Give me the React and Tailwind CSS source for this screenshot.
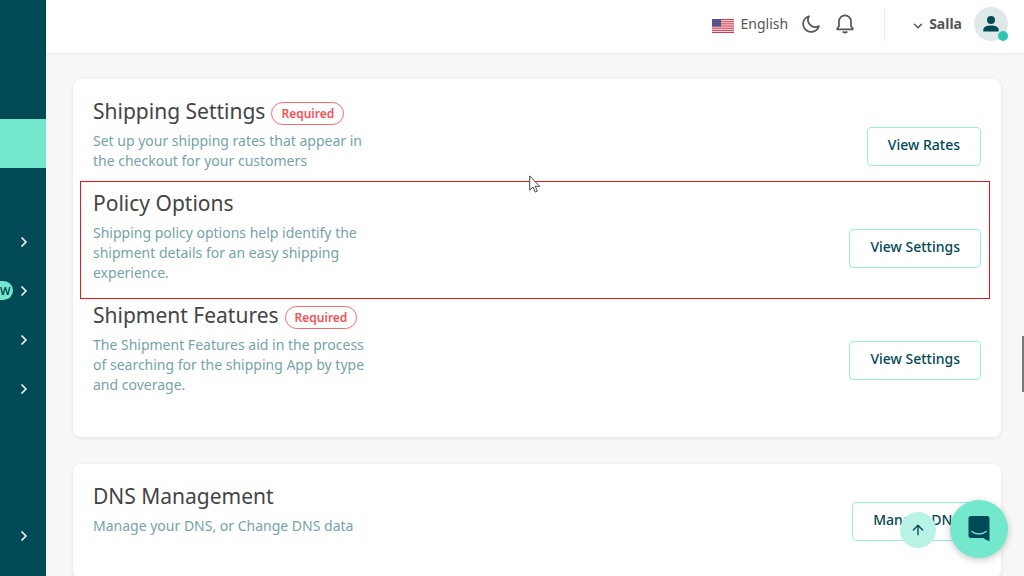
import { ArrowUp, ChevronDown, ChevronRight } from "lucide-react";

const menuItems = [
  { id: "home", label: "Home" },
  { id: "settings", label: "Settings", active: true },
  { id: "account", label: "Account" },
  { id: "orders", label: "Orders", hasChildren: true },
  { id: "marketing", label: "Marketing", badge: "W", hasChildren: true },
  { id: "products", label: "Products", hasChildren: true },
  { id: "reports", label: "Reports", hasChildren: true },
  { id: "apps", label: "Apps" },
  { id: "services", label: "Services" },
  { id: "more", label: "More", hasChildren: true },
];

const shippingRows = [
  {
    title: "Shipping Settings",
    required: true,
    description: "Set up your shipping rates that appear in the checkout for your customers",
    action: "View Rates",
  },
  {
    title: "Policy Options",
    highlighted: true,
    description:
      "Shipping policy options help identify the shipment details for an easy shipping experience.",
    action: "View Settings",
  },
  {
    title: "Shipment Features",
    required: true,
    description:
      "The Shipment Features aid in the process of searching for the shipping App by type and coverage.",
    action: "View Settings",
  },
];

const dnsRow = {
  title: "DNS Management",
  description: "Manage your DNS, or Change DNS data",
  action: "Manage DNS",
};

function Flag() {
  return (
    <svg viewBox="0 0 22 14" className="h-[14px] w-[22px]" aria-hidden="true">
      <rect width="22" height="14" fill="#f6e9ec" />
      {[0, 1, 2, 3, 4, 5, 6].map((i) => (
        <rect key={i} y={i * 2.15} width="22" height="1.1" fill="#d3394f" />
      ))}
      <rect width="9" height="7.5" fill="#514f86" />
      {[1.5, 3.5, 5.5, 7.5].map((x) =>
        [1.3, 3.6, 5.9].map((y) => (
          <circle key={`${x}-${y}`} cx={x} cy={y} r="0.3" fill="#a5a4c4" />
        ))
      )}
    </svg>
  );
}

function Sidebar() {
  return (
    <nav className="w-[46px] shrink-0 overflow-hidden bg-[#004956] pt-[70px]">
      {menuItems.map((item) => (
        <a
          key={item.id}
          href="#"
          aria-label={item.label}
          className={
            item.active
              ? "flex h-[49px] items-center justify-end bg-[#73e8cd]"
              : "flex h-[49px] items-center justify-end gap-[2px] pr-[14px]"
          }
        >
          {item.badge && (
            <span className="mr-auto shrink-0 rounded-r-full bg-[#73e8cd] pr-[3px] text-[11px] font-semibold leading-[19px] text-[#004956]">
              {item.badge}
            </span>
          )}
          {item.hasChildren && (
            <ChevronRight className="size-4 shrink-0 text-white" strokeWidth={2.5} />
          )}
        </a>
      ))}
    </nav>
  );
}

function Header() {
  return (
    <header className="relative z-10 flex h-[53px] shrink-0 items-start justify-end bg-white pr-4 text-[#555] shadow-[0_1px_2px_rgba(0,0,0,0.06)]">
      <div className="flex h-12 items-center">
        <button type="button" className="flex items-center gap-[7px] text-sm">
          <span className="pt-1">
            <Flag />
          </span>
          English
        </button>
        <button type="button" aria-label="Dark mode" className="ml-[14px]">
          <svg viewBox="0 0 18 18" className="size-[18px]" fill="none" stroke="currentColor" strokeWidth="1.7" strokeLinejoin="round">
            <path d="M7 1.2A8 8 0 1 0 16.9 11 7.2 7.2 0 0 1 7 1.2z" />
          </svg>
        </button>
        <button type="button" aria-label="Notifications" className="ml-4">
          <svg viewBox="0 0 18 20" className="h-5 w-[18px]" fill="none" stroke="currentColor" strokeWidth="1.7">
            <path d="M1.2 15.3V14.6L3 12.2V7.3a6 6 0 0 1 12 0v4.9l1.8 2.4v.7z" strokeLinejoin="round" />
            <path d="M6.8 17.6c.8 1.3 3.6 1.3 4.4 0" strokeWidth="2" />
          </svg>
        </button>
        <span className="ml-[30px] h-[33px] w-px bg-[#ececec]" />
        <button type="button" className="ml-[26px] flex items-center gap-1 text-sm font-bold">
          <ChevronDown className="mt-1 size-[14px]" strokeWidth={2.5} />
          Salla
          <span className="relative ml-2 flex size-[34px] items-center justify-center rounded-full bg-[#dfe9ea]">
            <svg viewBox="0 0 16 16" className="size-4" fill="#004956">
              <circle cx="8" cy="4" r="4" />
              <path d="M.3 15.5v-1.7C.3 11 4 9.6 8 9.6s7.7 1.4 7.7 4.2v1.7z" />
            </svg>
            <span className="absolute right-0 bottom-0 size-[10px] rounded-full bg-[#2bc5b4]" />
          </span>
        </button>
      </div>
    </header>
  );
}

function SettingRow({ title, required, highlighted, description, action }) {
  return (
    <div className="relative flex items-center justify-between">
      <div className="w-[280px] pb-4">
        <div className="flex items-center gap-[6px] whitespace-nowrap">
          <h2 className="text-[21px] leading-8 text-[#444]">{title}</h2>
          {required && (
            <span className="mt-1 rounded-full border border-[#f9696e] px-[9px] text-xs font-semibold leading-[21px] text-[#f65159]">
              Required
            </span>
          )}
        </div>
        <p className="mt-1 text-sm leading-5 text-[#76a3a9]">{description}</p>
      </div>
      <button
        type="button"
        className="mt-[10px] rounded border border-[#9aeedb] bg-white px-5 pt-[7px] pb-[10px] text-sm font-medium text-[#004956]"
      >
        {action}
      </button>
      {highlighted && (
        <div className="pointer-events-none absolute -top-[6px] -right-[9px] bottom-0 -left-[13px] border border-[#f51414]" />
      )}
    </div>
  );
}

function Card({ children }) {
  return (
    <section className="rounded-lg bg-white px-5 pt-4 pb-[26px] shadow-[0_1px_5px_rgba(0,0,0,0.08)]">
      {children}
    </section>
  );
}

export default function App() {
  return (
    <div className="relative flex h-screen overflow-hidden bg-[#f7f7f7] font-['Noto_Sans',sans-serif]">
      <Sidebar />

      <div className="flex min-w-0 flex-1 flex-col">
        <Header />
        <main className="flex min-h-0 flex-1 flex-col gap-[27px] pt-[26px] pr-[23px] pl-[27px]">
          {/* Shipping */}
          <Card>
            {shippingRows.map((row) => (
              <SettingRow key={row.title} {...row} />
            ))}
          </Card>

          {/* DNS */}
          <Card>
            <SettingRow {...dnsRow} />
          </Card>
        </main>
      </div>

      {/* Scroll thumb */}
      <div className="absolute top-[336px] right-0 h-14 w-[2px] bg-[#7b7b7b]" />

      {/* Floating buttons */}
      <button
        type="button"
        aria-label="Back to top"
        className="fixed right-[88px] bottom-7 flex size-9 items-center justify-center rounded-full bg-[#b9f3e5] text-[#004956]"
      >
        <ArrowUp className="size-4" strokeWidth={2} />
      </button>
      <button
        type="button"
        aria-label="Open chat"
        className="fixed right-4 bottom-[18px] flex size-[58px] items-center justify-center rounded-full bg-[#73e8cd] pb-[2px] shadow-[0_2px_7px_rgba(0,0,0,0.22)]"
      >
        <svg viewBox="0 0 22 25" className="h-[25px] w-[22px]">
          <path d="M3 0h16a2.5 2.5 0 0 1 2.5 2.5V25c-2.6-.6-4.5-1.5-6-3H3A2.5 2.5 0 0 1 .5 19.5v-17A2.5 2.5 0 0 1 3 0z" fill="#004956" />
          <path d="M3.8 15.5c4 3.3 10.4 3.3 14.4 0" fill="none" stroke="#73e8cd" strokeWidth="1.4" strokeLinecap="round" />
        </svg>
      </button>

      {/* Pointer */}
      <svg viewBox="0 0 12 18" className="pointer-events-none absolute top-[175px] left-[529px] h-[18px] w-3">
        <path d="M.7.9v14.2l3.3-3 2.2 5 2.2-1-2.2-4.8h4.5z" fill="#fff" stroke="#444" strokeWidth="1" />
      </svg>
    </div>
  );
}
